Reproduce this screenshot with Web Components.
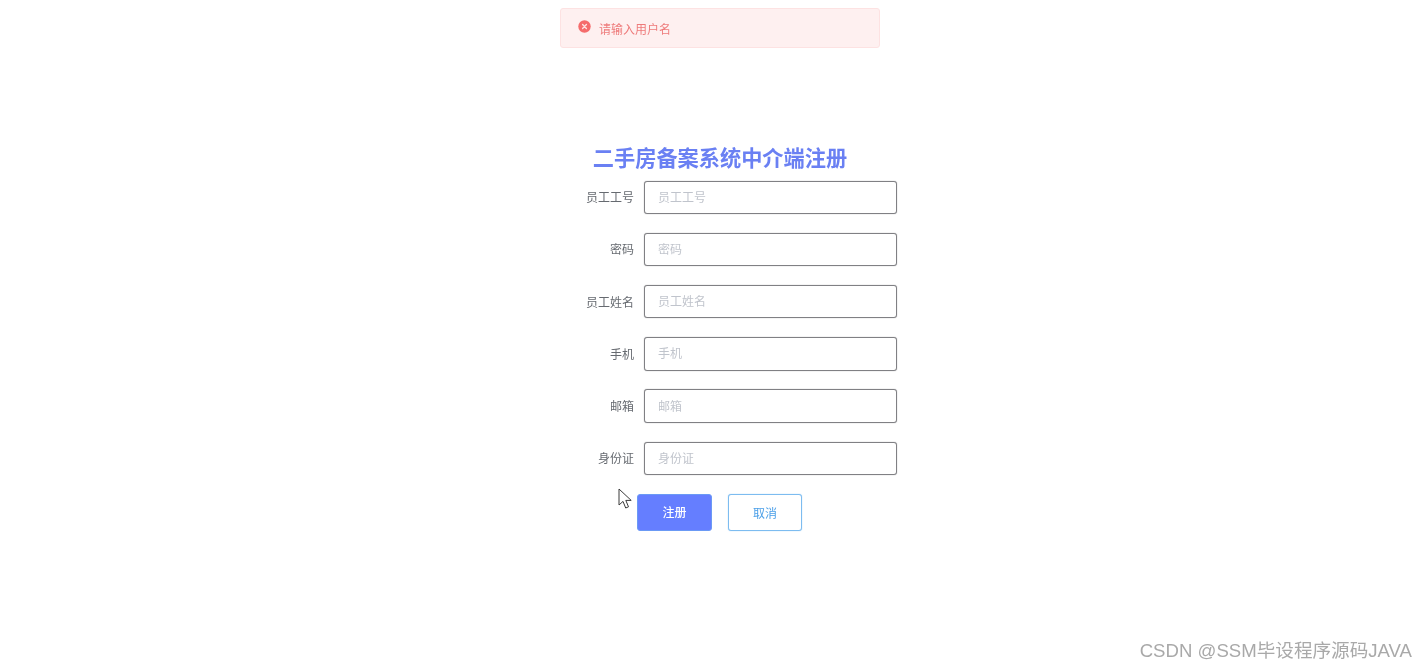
<!DOCTYPE html>
<html lang="zh">
<head>
<meta charset="utf-8">
<title>二手房备案系统中介端注册</title>
<style>
    html, body { margin: 0; height: 100%; background: #fff; }
    body { font-family: "Liberation Sans", "Noto Sans CJK SC", sans-serif; }
</style>
</head>
<body>
<register-page>
    <toast-message>请输入用户名</toast-message>
    <register-form title="二手房备案系统中介端注册">
        <form-row label="员工工号"></form-row>
        <form-row label="密码"></form-row>
        <form-row label="员工姓名"></form-row>
        <form-row label="手机"></form-row>
        <form-row label="邮箱"></form-row>
        <form-row label="身份证"></form-row>
        <action-button slot="actions" kind="primary">注册</action-button>
        <action-button slot="actions">取消</action-button>
    </register-form>
    <mouse-pointer></mouse-pointer>
    <water-mark>CSDN @SSM毕设程序源码JAVA</water-mark>
</register-page>

<script>
class RegisterPage extends HTMLElement {
    constructor() {
        super();
        this.attachShadow({mode: 'open'}).innerHTML =
            `<style>
                :host {
                    display: flex;
                    flex-direction: column;
                    align-items: center;
                    position: relative;
                    height: 670px;
                    overflow: hidden;
                    padding-top: 147px;
                    box-sizing: border-box;
                    filter: blur(0.35px);
                }
            </style>
            <slot></slot>`;
    }
}

class ToastMessage extends HTMLElement {
    constructor() {
        super();
        this.attachShadow({mode: 'open'}).innerHTML =
            `<style>
                :host {
                    position: absolute;
                    top: 8px;
                    left: 560px;
                    width: 320px;
                    height: 39.5px;
                    box-sizing: border-box;
                    display: flex;
                    align-items: center;
                    gap: 8px;
                    padding: 0 17px;
                    background: #fef0f0;
                    border: 1px solid #fde2e2;
                    border-radius: 3px;
                    color: #ee7a7a;
                    font-size: 12px;
                }
                svg { width: 13px; height: 13px; margin-top: -3px; flex: none; }
                span { margin-top: 1px; }
            </style>
            <svg viewBox="0 0 13 13">
                <circle cx="6.5" cy="6.5" r="6.2" fill="#f56c6c"/>
                <path d="M4.6 4.6l3.8 3.8M8.4 4.6l-3.8 3.8" stroke="#fde2e2" stroke-width="1.4" stroke-linecap="round"/>
            </svg>
            <span><slot></slot></span>`;
    }
}

class RegisterForm extends HTMLElement {
    constructor() {
        super();
        this.attachShadow({mode: 'open'}).innerHTML =
            `<style>
                :host {
                    display: block;
                    width: 380px;
                }
                h1 {
                    margin: 0 0 6.1px;
                    height: 27.5px;
                    padding-left: 12px;
                    line-height: 24px;
                    font-size: 21.2px;
                    font-weight: 700;
                    text-align: center;
                    color: #6a80f3;
                }
                .rows { display: flex; flex-direction: column; gap: 18.8px; padding-left: 42px; }
                .actions {
                    display: flex;
                    gap: 17px;
                    margin-top: 18.9px;
                    padding-left: 113px;
                }
            </style>
            <h1></h1>
            <div class="rows"><slot></slot></div>
            <div class="actions"><slot name="actions"></slot></div>`;
    }

    connectedCallback() {
        this.shadowRoot.querySelector('h1').textContent = this.getAttribute('title');
    }
}

class FormRow extends HTMLElement {
    constructor() {
        super();
        this.attachShadow({mode: 'open'}).innerHTML =
            `<style>
                :host { display: flex; align-items: center; gap: 10px; height: 33.4px; }
                label {
                    width: 68px;
                    margin-top: -1px;
                    text-align: right;
                    font-size: 12px;
                    color: #666a70;
                }
                input {
                    width: 253px;
                    height: 33.4px;
                    box-sizing: border-box;
                    padding: 1px 13px 0;
                    border: 1px solid #808084;
                    border-radius: 3px;
                    box-shadow: 0 0 1px #8b8b8f;
                    background: #fff;
                    outline: none;
                    font: 12px "Liberation Sans", "Noto Sans CJK SC", sans-serif;
                }
                input::placeholder { color: #c0c4cc; opacity: 1; }
            </style>
            <label for="field"></label>
            <input id="field" type="text">`;
    }

    connectedCallback() {
        const text = this.getAttribute('label');
        this.shadowRoot.querySelector('label').textContent = text;
        this.shadowRoot.querySelector('input').placeholder = text;
    }
}

class ActionButton extends HTMLElement {
    constructor() {
        super();
        this.attachShadow({mode: 'open'}).innerHTML =
            `<style>
                :host {
                    display: flex;
                    align-items: center;
                    justify-content: center;
                    width: 74px;
                    height: 37px;
                    box-sizing: border-box;
                    border: 1px solid #7dbcf0;
                    border-radius: 3px;
                    box-shadow: 0 0 1px #7dbcf0;
                    background: #fff;
                    color: #4a9fe8;
                    font-size: 12px;
                }
                :host([kind=primary]) {
                    width: 75px;
                    margin-right: -1px;
                    padding-bottom: 2px;
                    background: #657eff;
                    border-color: #6b9af5;
                    box-shadow: none;
                    color: #fff;
                    font-weight: 500;
                }
            </style>
            <slot></slot>`;
    }
}

class MousePointer extends HTMLElement {
    constructor() {
        super();
        this.attachShadow({mode: 'open'}).innerHTML =
            `<style>
                :host { position: absolute; left: 618px; top: 488px; width: 15px; height: 23px; }
                svg { display: block; }
            </style>
            <svg width="15" height="23" viewBox="0 0 15 23">
                <path d="M1 1v16l4-3.6 2.7 6.6 2.8-1.2-2.7-6.4h5.4z" fill="#fff" stroke="#3a3a3a" stroke-width="1" stroke-linejoin="round"/>
            </svg>`;
    }
}

class WaterMark extends HTMLElement {
    constructor() {
        super();
        this.attachShadow({mode: 'open'}).innerHTML =
            `<style>
                :host {
                    position: absolute;
                    right: 16px;
                    bottom: 7px;
                    font-size: 18.6px;
                    line-height: 24px;
                    color: #a9a9a9;
                    white-space: nowrap;
                }
            </style>
            <slot></slot>`;
    }
}

customElements.define('register-page', RegisterPage);
customElements.define('toast-message', ToastMessage);
customElements.define('register-form', RegisterForm);
customElements.define('form-row', FormRow);
customElements.define('action-button', ActionButton);
customElements.define('mouse-pointer', MousePointer);
customElements.define('water-mark', WaterMark);
</script>
</body>
</html>
